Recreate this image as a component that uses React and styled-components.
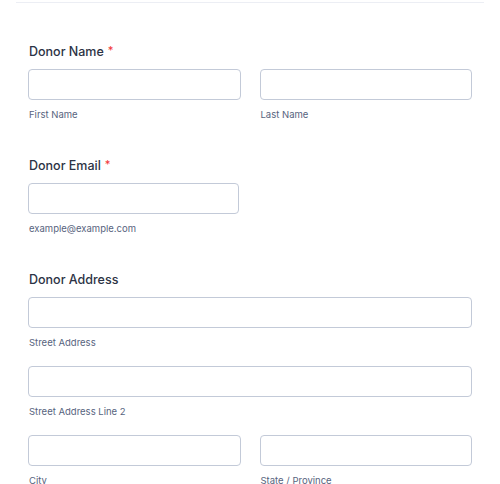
import React from "react";
import styled, { createGlobalStyle } from "styled-components";

const GlobalStyle = createGlobalStyle`
  * { box-sizing: border-box; }
  html, body { margin: 0; padding: 0; background: #ffffff; }
  body { font-family: Inter, "Noto Sans", sans-serif; color: #2c3345; }
`;

const Page = styled.div`
  width: 500px;
  padding-top: 2px;
`;

const TopRule = styled.div`
  margin: 0 16px 0 16px;
  border-top: 1px solid #eceef4;
`;

const FormList = styled.ul`
  list-style: none;
  margin: 0;
  padding: 38px 28px 0 28px;
  display: flex;
  flex-direction: column;
  gap: 33px;
`;

const Field = styled.li`
  display: flex;
  flex-direction: column;
`;

const Label = styled.label`
  display: block;
  height: 22px;
  font-size: 12.5px;
  line-height: 22px;
  font-weight: 500;
  color: #2c3345;
  padding-left: 1px;
  margin-bottom: 6px;
`;

const Required = styled.span`
  color: #f23a3c;
  font-size: 11px;
  line-height: 0;
  margin-left: 4px;
  vertical-align: 2px;
`;

const Row = styled.div`
  display: grid;
  grid-template-columns: ${(p) => (p.$cols === 2 ? "1fr 1fr" : "1fr")};
  column-gap: 19px;
  margin-bottom: ${(p) => (p.$last ? "0" : "16px")};
`;

const Sub = styled.div`
  display: flex;
  flex-direction: column;
  width: ${(p) => p.$width || "auto"};
`;

const Input = styled.input`
  display: block;
  width: 100%;
  height: 31px;
  border: 1px solid #c3cad8;
  border-radius: 4px;
  background: #ffffff;
  padding: 0 10px;
  font-family: inherit;
  font-size: 13px;
  outline: none;
`;

const SubLabel = styled.span`
  display: block;
  margin-top: 8px;
  font-size: 9.5px;
  line-height: 14px;
  color: #57647e;
  padding-left: 1px;
`;

export default function App() {
  return (
    <>
      <GlobalStyle />
      <Page>
        <TopRule />
        <FormList>
          <Field>
            <Label>
              Donor Name<Required>*</Required>
            </Label>
            <Row $cols={2} $last>
              <Sub>
                <Input type="text" />
                <SubLabel>First Name</SubLabel>
              </Sub>
              <Sub>
                <Input type="text" />
                <SubLabel>Last Name</SubLabel>
              </Sub>
            </Row>
          </Field>

          <Field>
            <Label>
              Donor Email<Required>*</Required>
            </Label>
            <Row $last>
              <Sub $width="211px">
                <Input type="email" />
                <SubLabel>example@example.com</SubLabel>
              </Sub>
            </Row>
          </Field>

          <Field>
            <Label>Donor Address</Label>
            <Row>
              <Sub>
                <Input type="text" />
                <SubLabel>Street Address</SubLabel>
              </Sub>
            </Row>
            <Row>
              <Sub>
                <Input type="text" />
                <SubLabel>Street Address Line 2</SubLabel>
              </Sub>
            </Row>
            <Row $cols={2}>
              <Sub>
                <Input type="text" />
                <SubLabel>City</SubLabel>
              </Sub>
              <Sub>
                <Input type="text" />
                <SubLabel>State / Province</SubLabel>
              </Sub>
            </Row>
          </Field>
        </FormList>
      </Page>
    </>
  );
}
